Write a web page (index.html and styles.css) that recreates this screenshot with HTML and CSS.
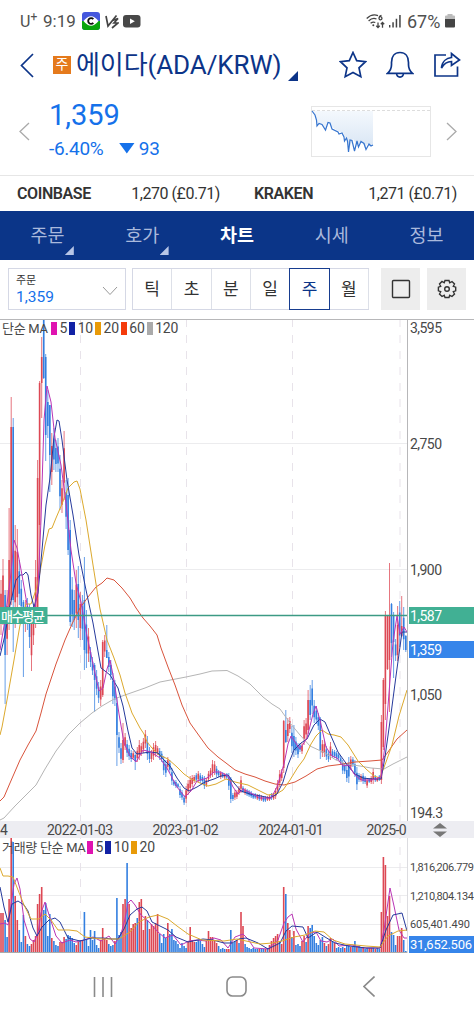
FILE: index.html
```html
<!DOCTYPE html>
<html lang="ko">
<head>
    <meta charset="UTF-8">
    <meta name="viewport" content="width=device-width, initial-scale=1.0">
    <title>에이다(ADA/KRW)</title>
    <link rel="stylesheet" href="styles.css">
</head>
<body>
    <div class="status-bar">
        <span class="carrier">U<sup>+</sup></span>
        <span class="clock">9:19</span>
        <svg class="app-icon" width="18" height="18" viewBox="0 0 18 18">
            <rect width="18" height="18" rx="3" fill="#4557dd"/>
            <path d="M0 9h18v6a3 3 0 0 1-3 3H3a3 3 0 0 1-3-3z" fill="#08a50c"/>
            <path d="M1.500 9Q9-.5 16.500 9Q9 18.500 1.500 9z" fill="#fff"/>
            <path d="M11.300 7.100A2.900 2.900 0 1 0 11.300 10.900" fill="none" stroke="#111" stroke-width="1.900"/>
        </svg>
        <svg class="vs-icon" width="14" height="15" viewBox="0 0 14 15" fill="none" stroke="#444" stroke-width="1.700">
            <path d="M1 2l2 10L11.500 1.500M7.500 6.500L13 4.500 9 9l4 0-6 5"/>
        </svg>
        <svg class="video-icon" width="18" height="13" viewBox="0 0 18 13">
            <rect width="17.500" height="12.500" rx="3" fill="#484848"/>
            <path d="M7 3.500v5.600l4.800-2.800z" fill="#fff"/>
        </svg>
        <svg class="wifi-icon" width="19" height="15" viewBox="0 0 19 15" fill="none" stroke="#444" stroke-width="1.300">
            <path d="M.7 4.500Q6-.8 12 1.600M2.600 7Q6.500 3.200 10.500 5M4.600 9.300Q7 7.300 9.300 8.500"/>
            <path d="M15.500 1.300Q13 2 13 4.500a1.500 1.500 0 1 0 1.500-1.700M12 8.500v5M10.300 11.800l1.700 1.800 1.700-1.800M16.500 13.700v-5M14.800 10.300l1.700-1.800 1.700 1.800"/>
            <circle cx="7.300" cy="11.300" r="1" fill="#444" stroke="none"/>
        </svg>
        <svg class="signal-icon" width="12" height="13" viewBox="0 0 12 13" fill="#444">
            <path d="M0 10h1.400v2.600H0zM3.300 7.200h1.500v5.400H3.300zM6.700 3.800h1.500v8.800H6.700zM10.200 0h1.500v12.600h-1.500z"/>
        </svg>
        <span class="battery-level">67%</span>
        <svg class="battery-icon" width="10" height="14" viewBox="0 0 10 14">
            <path d="M2.500 0h5v1.500H9A1 1 0 0 1 10 2.500V5H0V2.500a1 1 0 0 1 1-1h1.500z" fill="#bbb"/>
            <path d="M0 5h10v7.500a1 1 0 0 1-1 1H1a1 1 0 0 1-1-1z" fill="#444"/>
        </svg>
    </div>

    <header>
        <svg class="back" width="14" height="25" viewBox="0 0 14 25"><path d="M13 1L1.500 12.500 13 24"/></svg>
        <span class="badge">주</span>
        <h1>에이다(ADA/KRW)</h1>
        <i class="corner"></i>
        <nav class="actions">
            <svg width="28" height="28" viewBox="0 0 28 28"><path d="M14 1.500l3.700 8.200 8.800 1-6.500 6.100 1.800 8.900L14 21.400l-7.800 4.300L8 16.800 1.500 10.700l8.800-1z"/></svg>
            <svg width="28" height="28" viewBox="0 0 28 28"><path d="M1.500 22.300h25c-2.700-2.300-4-5-4-8.500v-2.300C22.500 5.500 19.500 1.500 14 1.500S5.500 5.500 5.500 11.500v2.300c0 3.500-1.300 6.200-4 8.500zM10.500 22.500c.5 4.700 6.500 4.700 7 0"/></svg>
            <svg width="28" height="28" viewBox="0 0 28 28"><path d="M13 4H2v21h22.500V15.500M8.500 17C9 10.500 13.500 7 18.500 6.500V2.500L26.500 9 18.500 14.500v-4C14 10.500 11 12.500 8.500 17z"/></svg>
        </nav>
    </header>

    <section class="quote">
        <svg class="arrow" width="11" height="19" viewBox="0 0 11 19"><path d="M10 1L1 9.500 10 18"/></svg>
        <div class="price">
            <strong>1,359</strong>
            <p>-6.40% <i class="down"></i>93</p>
        </div>
        <svg class="spark" width="120" height="51" viewBox="0 0 120 51">
            <defs>
                <linearGradient id="fade" x2="0" y2="1">
                    <stop offset="0" stop-color="#f4f8fd"/>
                    <stop offset="1" stop-color="#d8e5f4"/>
                </linearGradient>
            </defs>
            <path d="M1 5H62V39L60 40 56 38 54 42 51 35 46 39 42 33 38 43 35 33 32 27 25 24 20 20 17 16 14 22 10 18 6 19 4 10z" fill="url(#fade)"/>
            <rect x=".5" y=".5" width="119" height="50" fill="none" stroke="#e6e6e6"/>
            <path d="M1 4.500H119" stroke="#ddd" stroke-dasharray="3 2"/>
            <path d="M1 5L4 9 5.500 14 6 20 8 17.500 11 18.500 14.500 24 17 16.500 19 17 21 23 27 26 28 28 31 27 33 31 33.500 35 35.500 32 36.500 35 37.500 46 39 34 41 34.500 43.500 45 46 35 47.500 41 50 35.500 53 37.500 55 43.500 58 38 60 40 62 39" fill="none" stroke="#3675cf" stroke-width="1.200"/>
        </svg>
        <svg class="arrow" width="11" height="19" viewBox="0 0 11 19"><path d="M1 1l9 8.500L1 18"/></svg>
    </section>

    <section class="exchanges">
        <div><b>COINBASE</b><span>1,270 (£0.71)</span></div>
        <div><b>KRAKEN</b><span>1,271 (£0.71)</span></div>
    </section>

    <nav class="tabs">
        <a class="more">주문</a>
        <a class="more">호가</a>
        <a class="active">차트</a>
        <a>시세</a>
        <a>정보</a>
    </nav>

    <section class="toolbar">
        <div class="order">
            <div><small>주문</small><span>1,359</span></div>
            <svg width="16" height="10" viewBox="0 0 16 10"><path d="M1 1l7 7.500L15 1"/></svg>
        </div>
        <div class="periods">
            <span>틱</span><span>초</span><span>분</span><span>일</span><span class="on">주</span><span>월</span>
        </div>
        <button class="tool"><svg width="20" height="20" viewBox="0 0 20 20"><rect x="1.500" y="1.500" width="17" height="17" rx="1"/></svg></button>
        <button class="tool"><svg width="20" height="20" viewBox="0 0 20 20"><path d="M8 1.500h4l.7 2.300 2.300-1.200L17.500 5l-1.200 2.300 2.400.9v3.600l-2.400.9 1.200 2.300-2.500 2.500-2.300-1.200-.7 2.200H8l-.8-2.200L5 17.500 2.500 15l1.200-2.300-2.300-.9V8.200l2.300-.9L2.500 5 5 2.500l2.200 1.300z"/><circle cx="10" cy="10" r="2.300"/></svg></button>
    </section>

    <section class="chart">
        <svg id="chart" width="474" height="634" viewBox="0 319 474 634">
            <path d="M0 443.500H407M0 569.500H407M0 695H407M0 867.500H407M0 895.500H407M0 924.500H407" stroke="#ececee"/>
            <path d="M80.500 319V952M186.500 319V952M292.500 319V952M400 319V952" stroke="#e8e3ea" stroke-dasharray="8 8"/>

            <g id="candles"></g>
            <g class="ma">
                <path stroke="#b5b5b5" d="M0 820L4 818 15 806 25 796 36 785 45 769 56 751 68 735 80 723 92 713 102 706 114 699 125 695 145 688 160 682 186 677 200 674 212 671 227 670.500 238 676 250 684 263 697 272 704 280 709 290 723 300 735 310 746 325 753 336 760 346 764 360 766 371 768 384 769 393 764 407 757"/>
                <path stroke="#d9543c" d="M0 801L4 797 10 783 20 760 28 745 36 731 41 713 46 694 56 664 65 640 72 624 80 608 88 597 96 587 102 583 107 578 114 580 122 588 130 598 136 608 143 618 150 626 157 635 161 648 168 667 175 685 182 705 190 723 200 737 208 748 218 757 226 763 235 770 245 774 255 777 265 781 275 784 284 785 295 782 306 776 317 769 328 766 340 764.500 355 762 370 761 382 760 388 752 397 739 407 730"/>
                <path stroke="#dca92e" d="M0 735L2 727 7 700 14 660 20 625 26 604 31 604 36 590 40 572 45 545 49 529 52 528 56 518 62 504 68 488 74 482 77 481 80 489 86 520 93 565 100 609 107 640 114 658 120 675 125 693 132 713 140 728 144 734 147 742 152 748 159 755 168 759 177 767 184 774 191 779 200 783 208 786 216 784 226 779 235 782 248 785 258 790 268 795 278 793 283 790 290 780 298 767 304 759 311 744 316 736 322 730 328 734 334 735 341 737 348 745 358 761 366 769 374 776 380 778 386 762 392 745 399 716 407 690"/>
                <path stroke="#263a9c" d="M0 656L5 635 10 605 16 580 20 575 23 575 26 572 28 575 31 595 34 607 38 593 42 550 46 505 50 478 54 437 57 420 59 421 62 440 67 480 73 515 79 555 86 590 93 623 101 668 105 671 110 675 118 688 123 706 128 731 132 748 137 754 143 753 150 752 158 753 164 760 170 766 177 778 184 788 189 791 197 787 205 782 214 779 221 776 228 775 234 783 241 791 250 794 261 796 270 798 277 794 283 782 288 765 294 750 301 743 307 739 314 725 320 719 325 722 331 736 338 752 348 766 355 774 363 778 372 779 381 779 385 757 391 714 396 676 402 632 407 632"/>
                <path stroke="#ba35b5" d="M0 650L5 620 11 573 14 540 17 548 22 575 28 610 33 620 38 588 41 520 44 420 47 386 51 402 55 438 61 465 66 503 71 550 76 583 81 602 87 636 93 664 99 691 103 688 107 669 110 660 114 680 119 714 124 743 130 756 136 762 143 750 151 752 160 758 168 770 177 787 185 797 191 791 197 781 207 778 214 772 220 772 228 776 233 787 238 794 243 789 249 792 260 798 271 798 277 787 284 764 288 744 291 736 295 742 300 749 307 738 313 714 316 706 320 720 326 747 332 756 337 758 343 766 349 765 354 774 361 780 372 780 381 777 385 745 389 693 393 642 397 616 400 634 404 627 407 632"/>
            </g>
            <path d="M0 615.500H407" stroke="#3c9a84" stroke-width="1.400"/>

            <g id="volumes"></g>
            <g class="ma">
                <path stroke="#ba35b5" d="M0 924L5 923 8 925 11 905 14 884 17 878 20 889 24 920 30 939 34 942 38 933 41 913 45 902 50 918 56 936 62 943 70 940 76 942 84 940 93 937 101 941 109 936 115 944 121 934 125 919 128 903 131 900 135 905 141 915 149 922 158 932 165 938 173 935 181 945 189 941 197 940 206 941 214 938 221 940 228 948 235 937 243 934 248 939 254 948 268 949 278 940 284 923 288 917 292 914 296 929 303 942 310 933 316 932 321 941 327 942 333 939 339 946 352 945 363 948 380 948 384 930 388 902 390 888 394 906 399 930 404 938 407 938"/>
                <path stroke="#263a9c" d="M0 887L4 907 8 922 12 904 18 901 24 905 28 911 33 928 37 936 42 927 49 920 55 918 60 922 68 938 80 941 92 938 103 938 112 939 118 939 124 929 130 915 137 909 142 907 147 911 152 922 160 926 168 930 176 937 188 942 203 939 213 940 224 943 232 943 239 939 246 938 258 943 268 949 280 943 286 931 292 926 303 927 308 938 317 932 325 937 335 943 349 946 366 948 380 948 386 930 393 915 402 913 407 931"/>
                <path stroke="#dca92e" d="M0 868L3 876 8 876 13 877 18 890 24 905 31 919 39 919 45 914 51 920 58 930 69 930 77 931 85 937 101 939 119 939 130 932 139 922 149 917 158 915 168 919 177 926 188 934 202 940 224 941 237 939 246 941 260 944 272 943 282 941 294 937 305 935 315 931 324 932 333 940 345 944 366 946 380 947 388 936 398 931 407 930"/>
            </g>

            <path d="M0 319.500H474" stroke="#b7b7b9"/>
            <path d="M407.500 319V821" stroke="#b7b7b9"/>
            <path d="M407.500 838V953" stroke="#dcdce0"/>
            <rect y="821" width="474" height="17" fill="#ededf2"/>
            <path d="M0 952.500H407" stroke="#aaa"/>
            <g class="dates">
                <text x="0" y="834.500">4</text>
                <text x="47" y="834.500" textLength="66">2022-01-03</text>
                <text x="152.500" y="834.500" textLength="66">2023-01-02</text>
                <text x="258.500" y="834.500" textLength="65">2024-01-01</text>
                <text x="366.500" y="834.500" textLength="40">2025-0</text>
            </g>
            <path d="M433 828.500L440 823l7 5.500zM433 831.500h14L440 837z" fill="#777"/>
            <g class="prices">
                <text x="410" y="333" textLength="32">3,595</text>
                <text x="410" y="449" textLength="32">2,750</text>
                <text x="410" y="574.500" textLength="32">1,900</text>
                <text x="410" y="700" textLength="32">1,050</text>
                <text x="410" y="818" textLength="33">194.3</text>
            </g>
            <rect x="409" y="607" width="65" height="17" fill="#41b094"/>
            <rect x="409" y="641" width="65" height="17" fill="#3685ea"/>
            <rect x="409" y="936" width="65" height="17" fill="#3685ea"/>
            <g class="marks">
                <text x="410" y="621" textLength="32">1,587</text>
                <text x="410" y="654.500" textLength="32">1,359</text>
                <text x="410" y="948.500" textLength="62">31,652.506</text>
            </g>
            <g class="amounts">
                <text x="410" y="871" textLength="64">1,816,206.779</text>
                <text x="410" y="899.500" textLength="64">1,210,804.134</text>
                <text x="410" y="928" textLength="60">605,401.490</text>
            </g>
            <rect y="607" width="47.500" height="17" fill="#41b094"/>
            <text class="avg" x="1" y="620.500" textLength="44">매수평균</text>
        </svg>
        <div class="legend"><span>단순 MA</span><i class="c5"></i>5<i class="c10"></i>10<i class="c20"></i>20<i class="c60"></i>60<i class="c120"></i>120</div>
        <div class="legend volume"><span>거래량 단순 MA</span><i class="c5"></i>5<i class="c10"></i>10<i class="c20"></i>20</div>
    </section>

    <footer>
        <svg width="20" height="20" viewBox="0 0 20 20"><path d="M1.500 0v20M10 0v20M18.500 0v20"/></svg>
        <svg class="home" width="21" height="21" viewBox="0 0 21 21"><rect x="1" y="1" width="19" height="19" rx="5.500"/></svg>
        <svg width="12" height="21" viewBox="0 0 12 21"><path d="M11.500.5L1 10.500l10.500 10"/></svg>
    </footer>

    <script src="chart.js"></script>
</body>
</html>
```
FILE: styles.css
```css
* {
    box-sizing: border-box;
}

body {
    margin: 0;
    width: 474px;
    height: 1016px;
    overflow: hidden;
    background: #fff;
    color: #333;
    font-family: Roboto, 'Noto Sans CJK KR', sans-serif;
}

svg {
    display: block;
    flex: none;
}

/* Status bar */
.status-bar {
    display: flex;
    align-items: center;
    height: 42px;
    padding: 0 19px 0 20px;
    color: #505050;
    font-size: 17px;
}

.carrier {
    width: 23px;
    font-size: 16px;
    white-space: nowrap;
}

.carrier sup {
    font-size: 12px;
    line-height: 0;
}

.clock {
    width: 39px;
}

.vs-icon {
    margin: 0 4px 0 5px;
}

.wifi-icon {
    margin: 0 4px 0 auto;
}

.battery-level {
    width: 38px;
    margin-left: 6px;
    font-size: 18px;
}

/* Title row */
header {
    display: flex;
    align-items: center;
    height: 46px;
    padding: 2px 13px 2px 20px;
}

header svg {
    fill: none;
    stroke: #0c3488;
    stroke-width: 1.7;
}

.badge {
    flex: none;
    width: 18px;
    height: 18px;
    margin: 0 5px 0 19px;
    background: #e57a1c;
    color: #fff;
    font-size: 14px;
    line-height: 17px;
    text-align: center;
}

h1 {
    flex: none;
    width: 206px;
    margin: 0;
    color: #0c3488;
    font-size: 26px;
    font-weight: 400;
    line-height: 40px;
    letter-spacing: -0.1px;
    white-space: nowrap;
}

.corner {
    align-self: flex-end;
    width: 10px;
    height: 10px;
    margin-bottom: 5px;
    margin-left: 6px;
    background: #0c3488;
    clip-path: polygon(100% 0, 100% 100%, 0 100%);
}

.actions {
    display: flex;
    gap: 19px;
    margin-left: auto;
}

/* Quote */
.quote {
    display: flex;
    align-items: center;
    height: 88px;
    padding: 0 17px 0 19px;
    border-bottom: 1px solid #e6e6e6;
}

.arrow {
    fill: none;
    stroke: #aaa;
    stroke-width: 1.3;
}

.price {
    flex: none;
    width: 281px;
    padding: 0 0 3px 19px;
    color: #1571ea;
}

.price strong {
    display: block;
    font-size: 29px;
    font-weight: 400;
    line-height: 36px;
}

.price p {
    margin: 0;
    font-size: 19px;
    line-height: 31px;
    letter-spacing: -0.3px;
}

.down {
    display: inline-block;
    width: 16px;
    height: 11px;
    margin: 0 4px 1px 11px;
    background: #1571ea;
    clip-path: polygon(0 0, 100% 0, 50% 100%);
}

.spark {
    margin-right: 15px;
}

/* Exchanges */
.exchanges {
    display: grid;
    grid-template-columns: 1fr 1fr;
    height: 35px;
    font-size: 16px;
    line-height: 35px;
}

.exchanges div {
    display: flex;
    justify-content: space-between;
    padding: 0 17px;
}

.exchanges b {
    font-weight: 600;
    letter-spacing: -0.4px;
}

.exchanges span {
    letter-spacing: -0.45px;
}

/* Tabs */
.tabs {
    display: grid;
    grid-template-columns: repeat(5, 1fr);
    height: 49px;
    background: #0b3588;
}

.tabs a {
    position: relative;
    color: #aab9dc;
    font-size: 18.5px;
    line-height: 51px;
    text-align: center;
}

.tabs .active {
    color: #fff;
    font-weight: 700;
}

.more::after {
    content: '';
    position: absolute;
    right: 21px;
    bottom: 7px;
    width: 9px;
    height: 9px;
    background: #b7c6e7;
    clip-path: polygon(100% 0, 100% 100%, 0 100%);
}

/* Toolbar */
.toolbar {
    display: flex;
    height: 59px;
    padding: 8px 0 9px 8px;
}

.order {
    display: flex;
    flex: none;
    align-items: center;
    justify-content: space-between;
    width: 118px;
    margin-right: 6px;
    padding: 3px 7px 0;
    border: 1px solid #d5d8e5;
}

.order small {
    display: block;
    font-size: 11px;
    line-height: 14px;
}

.order span {
    display: block;
    color: #1571ea;
    font-size: 15.5px;
    line-height: 19px;
}

.order svg {
    fill: none;
    stroke: #999;
}

.periods {
    display: flex;
    flex: none;
    width: 237px;
    margin-right: 12px;
    border: 1px solid #d5d8e5;
    border-right: 0;
}

.periods span {
    flex: 1;
    border-right: 1px solid #dde0e8;
    font-size: 17px;
    line-height: 40px;
    text-align: center;
}

.periods .on {
    margin: -1px 0 -1px -1px;
    border: 1.5px solid #173d8f;
    color: #0b3588;
}

.tool {
    display: flex;
    flex: none;
    align-items: center;
    justify-content: center;
    width: 39px;
    margin: 0 7px 0 0;
    padding: 0;
    border: 0;
    background: #ededed;
}

.tool svg {
    fill: none;
    stroke: #333;
    stroke-width: 1.4;
}

/* Chart */
.chart {
    position: relative;
    height: 634px;
}

.chart text {
    fill: #484848;
    font-size: 14px;
}

.ma path {
    fill: none;
    stroke-width: 1;
    stroke-linejoin: round;
}

.chart .marks text,
.chart .avg {
    fill: #fff;
}

.chart .avg {
    font-size: 13px;
    font-weight: 500;
}

.chart .amounts text {
    font-size: 11px;
}

.chart .marks text:last-child {
    font-size: 13px;
}

.legend {
    position: absolute;
    top: 1px;
    left: 2px;
    display: flex;
    align-items: center;
    color: #484848;
    font-size: 14px;
    line-height: 17px;
    letter-spacing: -0.2px;
    white-space: pre;
}

.legend span {
    width: 47px;
    font-size: 13px;
    letter-spacing: -0.3px;
}

.legend.volume {
    top: 520px;
}

.legend.volume span {
    width: 83px;
}

.legend i {
    width: 6px;
    height: 13px;
    margin: 0 2.5px 0 2px;
}

.c5 { background: #df13b0; }
.c10 { background: #1222a5; }
.c20 { background: #e89a08; }
.c60 { background: #f43b0b; }
.c120 { background: #aaa; }

.up { fill: #dd4854; }
.dn { fill: #337fe0; }

.wick { opacity: 0.75; }

/* System navigation */
footer {
    display: flex;
    align-items: center;
    justify-content: space-between;
    height: 63px;
    padding: 4px 99px 0 93px;
}

footer svg {
    fill: none;
    stroke: #8a8a8a;
    stroke-width: 1.6;
}

footer .home {
    margin-right: 4px;
}
```
FILE: chart.js
```js
const STEP = 2.034;
const BASE = 952;

// one entry per week: direction, high, low and, where needed, body top and bottom
const candles = `
u580,635 u559,625 d590,704,595,655 u590,655 u508,630,560,622 u397,605,427,600 d418,652,427,600 u525,628 u529,620 d560,605
d580,615 d600,677,602,615 u600,632 d598,630 d604,648 u608,671 u606,645 u560,628 u460,615,478,610 u381,575,383,525
u337,418,357,383 d319,379,319,378 d354,461,357,435 d390,438 d405,492,405,455 u433,485 d428,470 d440,472 d438,472 d455,510
u480,513 u431,500 d480,529 d478,555,495,550 d520,626,530,622 d577,627 d590,630 u570,628 d566,638 u592,640
d595,640 d557,670,600,650 d610,668 u628,662 d647,667 d657,675 d663,712,665,680 d670,695 d682,703 u680,706
u640,697,642,695 u635,657 d625,650,650,658 d652,672 d660,680 d673,704 d680,706 d697,766,703,735 d732,753 d743,764
u723,763,740,760 u733,750 d740,757 d745,760 d750,762 u751,760 d752,770,755,761 u747,762 u740,760 u743,756
u738,753 u730,748 d736,760 d747,763 u750,762 u743,760 u741,757 u746,755 d748,760 d751,762
d756,775 d760,777 u757,770 d760,773 d768,785 d780,786 d780,788 d783,788 d786,798 d790,800
d795,805 u786,803 u780,795 u776,792 u775,787 u775,783 d773,782 u771,782 d773,783 d775,783
d776,789 u778,787 u771,782 u768,778 u760,777 u761,775 d766,777 d770,777 u771,779 d772,778
u773,779 d773,779 d773,790 d777,803,779,799 d793,801 u790,800 u790,799 u786,795 u776,793 d786,793
u788,795 d789,796 d790,797 d791,798 d793,799 d793,799 u794,800 d794,801 u795,801 d796,802
d796,802 u796,801 u795,801 d793,800 u794,800 u788,799 u780,794 u770,787 u769,781 u720,773,721,768
d710,743,730,742 u718,742 u717,733 d726,753 d725,757,736,750 d737,755 d743,758 d743,752 u743,754 u720,745
u718,740 u690,734,700,730 d685,720,700,715 d680,714 d700,723 d706,724 d713,730 d717,759,720,750 u740,757 u740,757
d746,760 d751,762 u742,760 d749,758 d750,758 d751,760 d753,760 d756,765 d760,774 d763,774
d766,782 d757,783 u756,770 d757,767 d760,777 d767,790 d773,782 u774,782 d773,784 d776,784
u778,788 d778,783 u776,784 u768,784 d775,782 u777,782 d775,781 u715,784,722,780 u678,750,680,747 u611,720,615,704
u615,670,616,669 u563,712,615,660 d603,657,604,643 d612,678,616,642 d639,661 u606,661,625,655 d601,647 u596,637,626,636 d607,650 d635,652,636,650`.trim().split(/\s+/);

const volumes = `
u913 u913 d920 d937 u899 u838 d842 u896 u920 d930 d942 d915 u936 d944 d946 u944 u940 u936 u904 u894
u887 d910 d903 d936 d914 u938 d941 d945 d946 u942 u942 u937 d939 d935 d936 d938 d943 u945 u942 d940
u941 d912 d940 d946 d930 d940 d931 d945 d948 u940 u928 u938 u940 d944 d946 d945 u941 d898 d935 d932
u904 u899 d863 u904 u928 u924 u923 d918 u902 u899 u930 u916 d920 u929 u924 u926 u923 u914 d934 d943
d934 d938 u923 d934 d929 d940 d941 d944 d948 d943 d946 d948 u941 u927 u940 u942 d942 d940 d941 d944
d947 u941 u931 u937 u937 u940 u943 d946 d949 d948 d949 u949 u949 d930 d943 d941 u940 d943 u912 u926
d944 d947 d948 d949 d948 d949 d949 u949 d949 d949 u949 d948 u945 u941 u938 u936 u934 d942 u944 u887
d894 u923 u930 d937 u931 d945 d944 d946 u941 u936 d942 u926 d928 d925 d936 d943 d945 d940 d937 u943
d946 u944 u938 d941 u943 d948 d947 d948 d947 u948 d946 d946 u947 d947 d941 u946 d946 d948 u947 d949
d948 u948 u948 d948 u949 d948 d949 u912 u857 u865 u916 u896 d932 d935 d945 u936 u936 u928 d940 d951`.trim().split(/\s+/);

function rect(x, y, width, height, name) {
    const cls = name[0] === 'u' ? 'up' : 'dn';
    const wick = width === 1 ? ' wick' : '';
    return `<rect class="${cls}${wick}" x="${x.toFixed(1)}" y="${y}" width="${width}" height="${height}"/>`;
}

let bars = '';
candles.forEach((item, i) => {
    const v = item.slice(1).split(',').map(Number);
    const range = v[1] - v[0];
    const top = v[2] || v[0] + range * 0.25;
    const bottom = v[3] || v[1] - range * 0.25;
    const x = 1 + i * STEP;
    bars += rect(x - 0.5, v[0], 1, range, item);
    bars += rect(x - 0.8, top, 1.6, Math.max(bottom - top, 1), item);
});
document.getElementById('candles').innerHTML = bars;

bars = '';
volumes.forEach((item, i) => {
    const top = Number(item.slice(1));
    bars += rect(0.2 + i * STEP, top, 1.6, BASE - top, item);
});
document.getElementById('volumes').innerHTML = bars;
```
